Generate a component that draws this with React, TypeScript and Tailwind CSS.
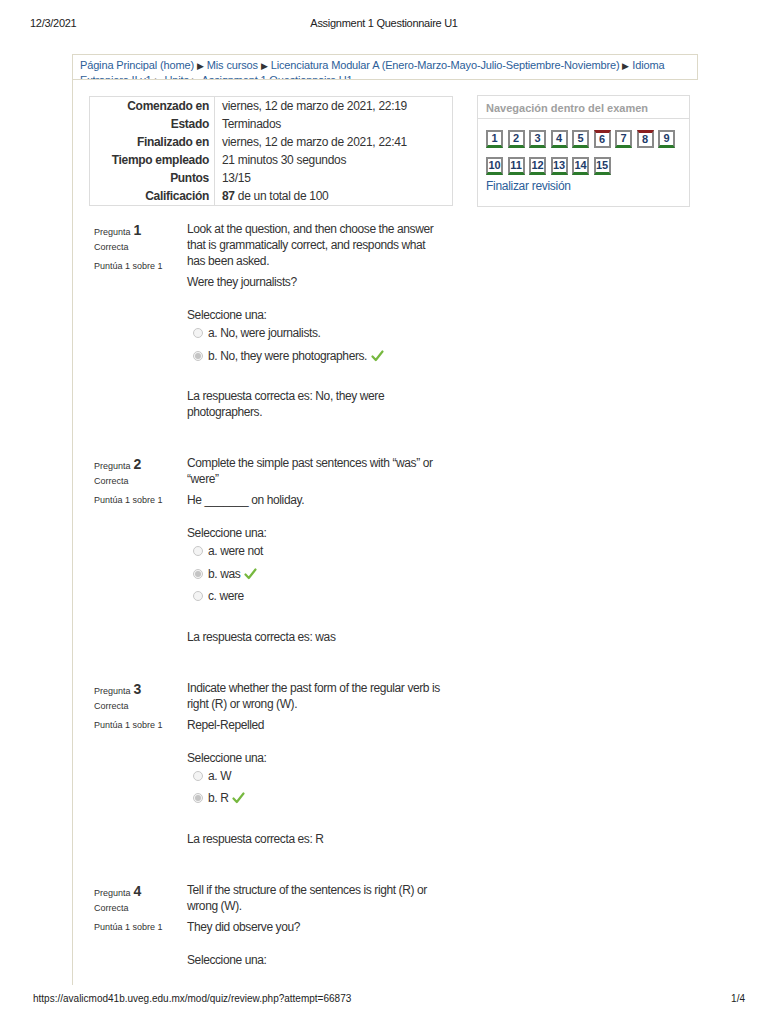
import React from 'react'

const font = { fontFamily: '"Liberation Sans", Arial, sans-serif' }

type Option = { label: string; checked?: boolean }

type Question = {
  n: number
  text: string[]
  prompt: string
  options: Option[]
  answer: string[]
}

const questions: Question[] = [
  {
    n: 1,
    text: [
      'Look at the question, and then choose the answer',
      'that is grammatically correct, and responds what',
      'has been asked.',
    ],
    prompt: 'Were they journalists?',
    options: [
      { label: 'a. No, were journalists.' },
      { label: 'b. No, they were photographers.', checked: true },
    ],
    answer: ['La respuesta correcta es: No, they were', 'photographers.'],
  },
  {
    n: 2,
    text: ['Complete the simple past sentences with “was” or', '“were”'],
    prompt: 'He _______ on holiday.',
    options: [
      { label: 'a. were not' },
      { label: 'b. was', checked: true },
      { label: 'c. were' },
    ],
    answer: ['La respuesta correcta es: was'],
  },
  {
    n: 3,
    text: ['Indicate whether the past form of the regular verb is', 'right (R) or wrong (W).'],
    prompt: 'Repel-Repelled',
    options: [{ label: 'a. W' }, { label: 'b. R', checked: true }],
    answer: ['La respuesta correcta es: R'],
  },
  {
    n: 4,
    text: ['Tell if the structure of the sentences is right (R) or', 'wrong (W).'],
    prompt: 'They did observe you?',
    options: [],
    answer: [],
  },
]

const summary: [string, React.ReactNode][] = [
  ['Comenzado en', 'viernes, 12 de marzo de 2021, 22:19'],
  ['Estado', 'Terminados'],
  ['Finalizado en', 'viernes, 12 de marzo de 2021, 22:41'],
  ['Tiempo empleado', '21 minutos 30 segundos'],
  ['Puntos', '13/15'],
  [
    'Calificación',
    <>
      <b>87</b> de un total de 100
    </>,
  ],
]

function Sep() {
  return <span className="mx-[3px] text-[9px] text-[#333]">▶</span>
}

function NavBox({ n, wrong }: { n: number; wrong?: boolean }) {
  return (
    <div
      className={
        wrong
          ? 'flex h-[18px] w-[17px] items-center justify-center border-2 border-t-[3px] border-[#8a8a8a] border-t-[#8b1f1f] bg-white text-[11px] font-bold leading-none text-[#1e3c6a]'
          : 'flex h-[18px] w-[17px] items-center justify-center border-2 border-b-[3px] border-[#8a8a8a] border-b-[#2b7a2b] bg-white text-[11px] font-bold leading-none text-[#1e3c6a]'
      }
    >
      {n}
    </div>
  )
}

function Radio({ checked }: { checked?: boolean }) {
  return (
    <span className="flex h-[10px] w-[10px] shrink-0 items-center justify-center rounded-full border border-[#c8c8c8] bg-[#f4f4f4]">
      {checked && <span className="h-[6px] w-[6px] rounded-full bg-[#c4c4c4]" />}
    </span>
  )
}

function Check() {
  return (
    <svg width="13" height="12" viewBox="0 0 13 12" className="ml-[4px]">
      <path d="M1.5 6.5 L4.8 10 L11.5 1.5" fill="none" stroke="#76b83f" strokeWidth="2.2" strokeLinecap="round" strokeLinejoin="round" />
    </svg>
  )
}

function QuestionBlock({ q, first }: { q: Question; first: boolean }) {
  return (
    <div className={first ? 'mt-[15px] flex' : 'mt-[35px] flex'}>
      <div className="w-[98px] pl-[5px] text-[9px] text-[#333]">
        <div className="flex h-[16px] items-end leading-none">
          <span>Pregunta</span>
          <span className="ml-[3px] text-[14px] font-bold leading-[14px]">{q.n}</span>
        </div>
        <div className="mt-[4px] leading-[12px]">Correcta</div>
        <div className="mt-[7px] leading-[12px]">Puntúa 1 sobre 1</div>
      </div>
      <div className="w-[280px] whitespace-nowrap text-[12px] leading-[16px] tracking-[-0.4px] text-[#333]">
        {q.text.map((t) => (
          <div key={t}>{t}</div>
        ))}
        <div className="mt-[5px]">{q.prompt}</div>
        <div className="mt-[17px]">Seleccione una:</div>
        {q.options.length > 0 && (
          <div className="-mt-[1px]">
            {q.options.map((o) => (
              <div key={o.label} className="flex h-[22.5px] items-center pl-[6px]">
                <Radio checked={o.checked} />
                <span className="ml-[5px]">{o.label}</span>
                {o.checked && <Check />}
              </div>
            ))}
          </div>
        )}
        {q.answer.length > 0 && (
          <div className="mt-[21px]">
            {q.answer.map((t) => (
              <div key={t}>{t}</div>
            ))}
          </div>
        )}
      </div>
    </div>
  )
}

export default function App() {
  const nav = Array.from({ length: 15 }, (_, i) => i + 1)
  return (
    <div className="relative h-[1024px] w-[768px] overflow-hidden bg-white" style={font}>
      <div className="grid h-[48px] grid-cols-3 items-center px-[30px] pb-[2px] text-[11px] text-[#222]">
        <span className="tracking-tight">12/3/2021</span>
        <span className="whitespace-nowrap text-center tracking-tight">Assignment 1 Questionnaire U1</span>
        <span />
      </div>

      <div className="ml-[72px] mt-[6px] h-[931px] w-[626px] overflow-hidden border-l border-[#ddd9c8]">
        <div className="h-[26px] overflow-hidden border-y border-r border-[#ddd9c8] px-[7px] pt-[3px] text-[11px] leading-[14px] tracking-[-0.15px] text-[#2c5e99]">
          Página Principal (home)
          <Sep />
          Mis cursos
          <Sep />
          Licenciatura Modular A (Enero-Marzo-Mayo-Julio-Septiembre-Noviembre)
          <Sep />
          Idioma
          <br />
          Extranjero II v1
          <Sep />
          Units
          <Sep />
          Assignment 1 Questionnaire U1
        </div>

        <div className="flex">
          <div className="w-[404px] pl-[16px]">
            <table className="mt-[16px] w-[364px] border border-[#dddddd] text-[12px] tracking-[-0.3px] text-[#333]">
              <tbody>
                {summary.map(([k, v]) => (
                  <tr key={k} className="h-[18px]">
                    <td className="w-[125px] border-r border-[#dddddd] pr-[5px] text-right font-bold leading-[18px]">{k}</td>
                    <td className="pl-[7px] leading-[18px]">{v}</td>
                  </tr>
                ))}
              </tbody>
            </table>

            {questions.map((q, i) => (
              <QuestionBlock key={q.n} q={q} first={i === 0} />
            ))}
          </div>

          <div className="mt-[15px] h-[112px] w-[213px] border border-[#dddddd]">
            <div className="h-[23px] border-b border-[#dddddd] pl-[8px] pt-[4px] text-[11px] font-bold text-[#a0a0a0]">
              Navegación dentro del examen
            </div>
            <div className="px-[8px] pt-[11px]">
              <div className="flex flex-wrap gap-x-[4.5px] gap-y-[9px]">
                {nav.map((n) => (
                  <NavBox key={n} n={n} wrong={n === 6 || n === 8} />
                ))}
              </div>
              <div className="mt-[3px] text-[12px] leading-[16px] tracking-[-0.3px] text-[#2c5e99]">Finalizar revisión</div>
            </div>
          </div>
        </div>
      </div>

      <div className="flex h-[26px] items-center justify-between px-[33px] pr-[23px] text-[10px] text-[#222]">
        <span>https://avalicmod41b.uveg.edu.mx/mod/quiz/review.php?attempt=66873</span>
        <span>1/4</span>
      </div>
    </div>
  )
}
